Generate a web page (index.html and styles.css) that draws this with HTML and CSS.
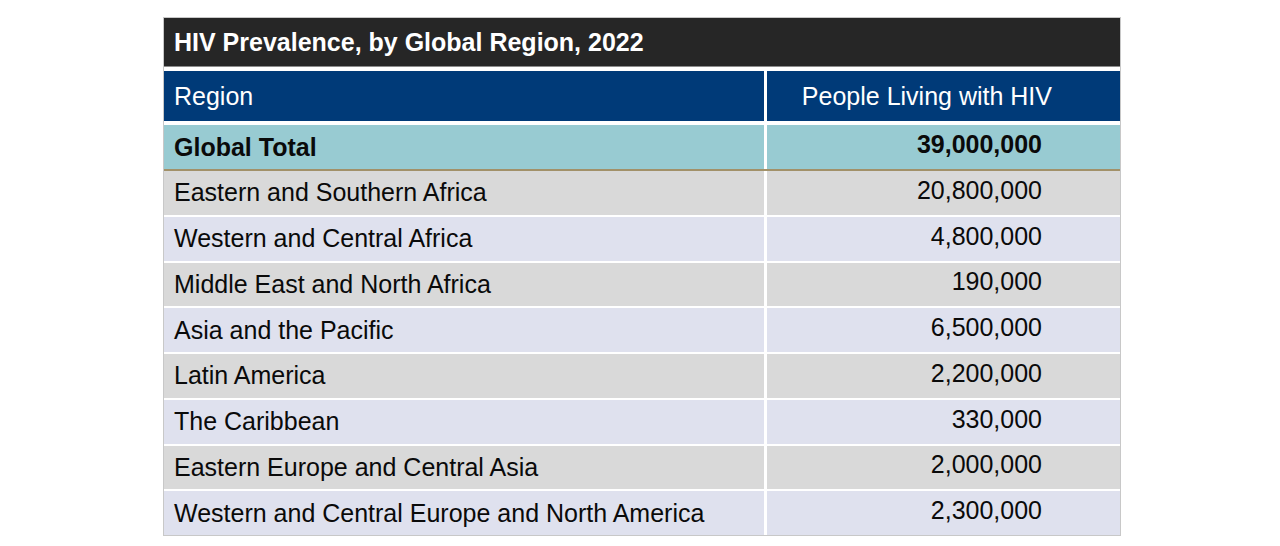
FILE: index.html
```html
<!DOCTYPE html>
<html lang="en">
<head>
<meta charset="utf-8">
<title>HIV Prevalence, by Global Region, 2022</title>
<link rel="stylesheet" href="styles.css">
</head>
<body>
<div class="table">
  <div class="title">HIV Prevalence, by Global Region, 2022</div>
  <div class="row head">
    <div class="cell">Region</div>
    <div class="cell num headnum">People Living with HIV</div>
  </div>
  <div class="row total">
    <div class="cell">Global Total</div>
    <div class="cell num">39,000,000</div>
  </div>
  <div class="row data even">
    <div class="cell">Eastern and Southern Africa</div>
    <div class="cell num">20,800,000</div>
  </div>
  <div class="row data odd">
    <div class="cell">Western and Central Africa</div>
    <div class="cell num">4,800,000</div>
  </div>
  <div class="row data even">
    <div class="cell">Middle East and North Africa</div>
    <div class="cell num">190,000</div>
  </div>
  <div class="row data odd">
    <div class="cell">Asia and the Pacific</div>
    <div class="cell num">6,500,000</div>
  </div>
  <div class="row data even">
    <div class="cell">Latin America</div>
    <div class="cell num">2,200,000</div>
  </div>
  <div class="row data odd">
    <div class="cell">The Caribbean</div>
    <div class="cell num">330,000</div>
  </div>
  <div class="row data even">
    <div class="cell">Eastern Europe and Central Asia</div>
    <div class="cell num">2,000,000</div>
  </div>
  <div class="row data odd">
    <div class="cell">Western and Central Europe and North America</div>
    <div class="cell num">2,300,000</div>
  </div>
</div>
</body>
</html>
```
FILE: styles.css
```css
html, body {
  margin: 0;
  padding: 0;
  background: #ffffff;
}

body {
  font-family: "Liberation Sans", Arial, Helvetica, sans-serif;
  font-size: 25px;
  color: #0a0a0a;
}

.table {
  margin: 17px 0 0 163px;
  width: 956px;
  border: 1px solid #c8c8c8;
  background: #ffffff;
  display: flex;
  flex-direction: column;
}

.title {
  height: 48px;
  border-bottom: 1px solid #8c8c8c;
  background: #262626;
  color: #ffffff;
  font-weight: bold;
  display: flex;
  align-items: center;
  padding: 0 0 0 10px;
}

.row {
  display: grid;
  grid-template-columns: 600px 353px;
  column-gap: 3px;
}

.cell {
  display: flex;
  align-items: center;
  padding: 0 0 0 10px;
  line-height: 1;
}

.num {
  justify-content: flex-end;
  padding: 0 78px 5px 0;
}

.head {
  margin-top: 4px;
  height: 50px;
}

.head .cell {
  background: #003a78;
  color: #ffffff;
}

.head .headnum {
  padding: 0 68px 0 0;
}

.total {
  margin-top: 4px;
  height: 44px;
  border-bottom: 2px solid #a29169;
  font-weight: bold;
}

.total .cell {
  background: #98cbd2;
}

.data {
  height: 43.75px;
  margin-top: 2px;
}

.total + .data {
  margin-top: 0;
}

.even .cell {
  background: #d9d9d9;
}

.odd .cell {
  background: #dfe1ee;
}
```
